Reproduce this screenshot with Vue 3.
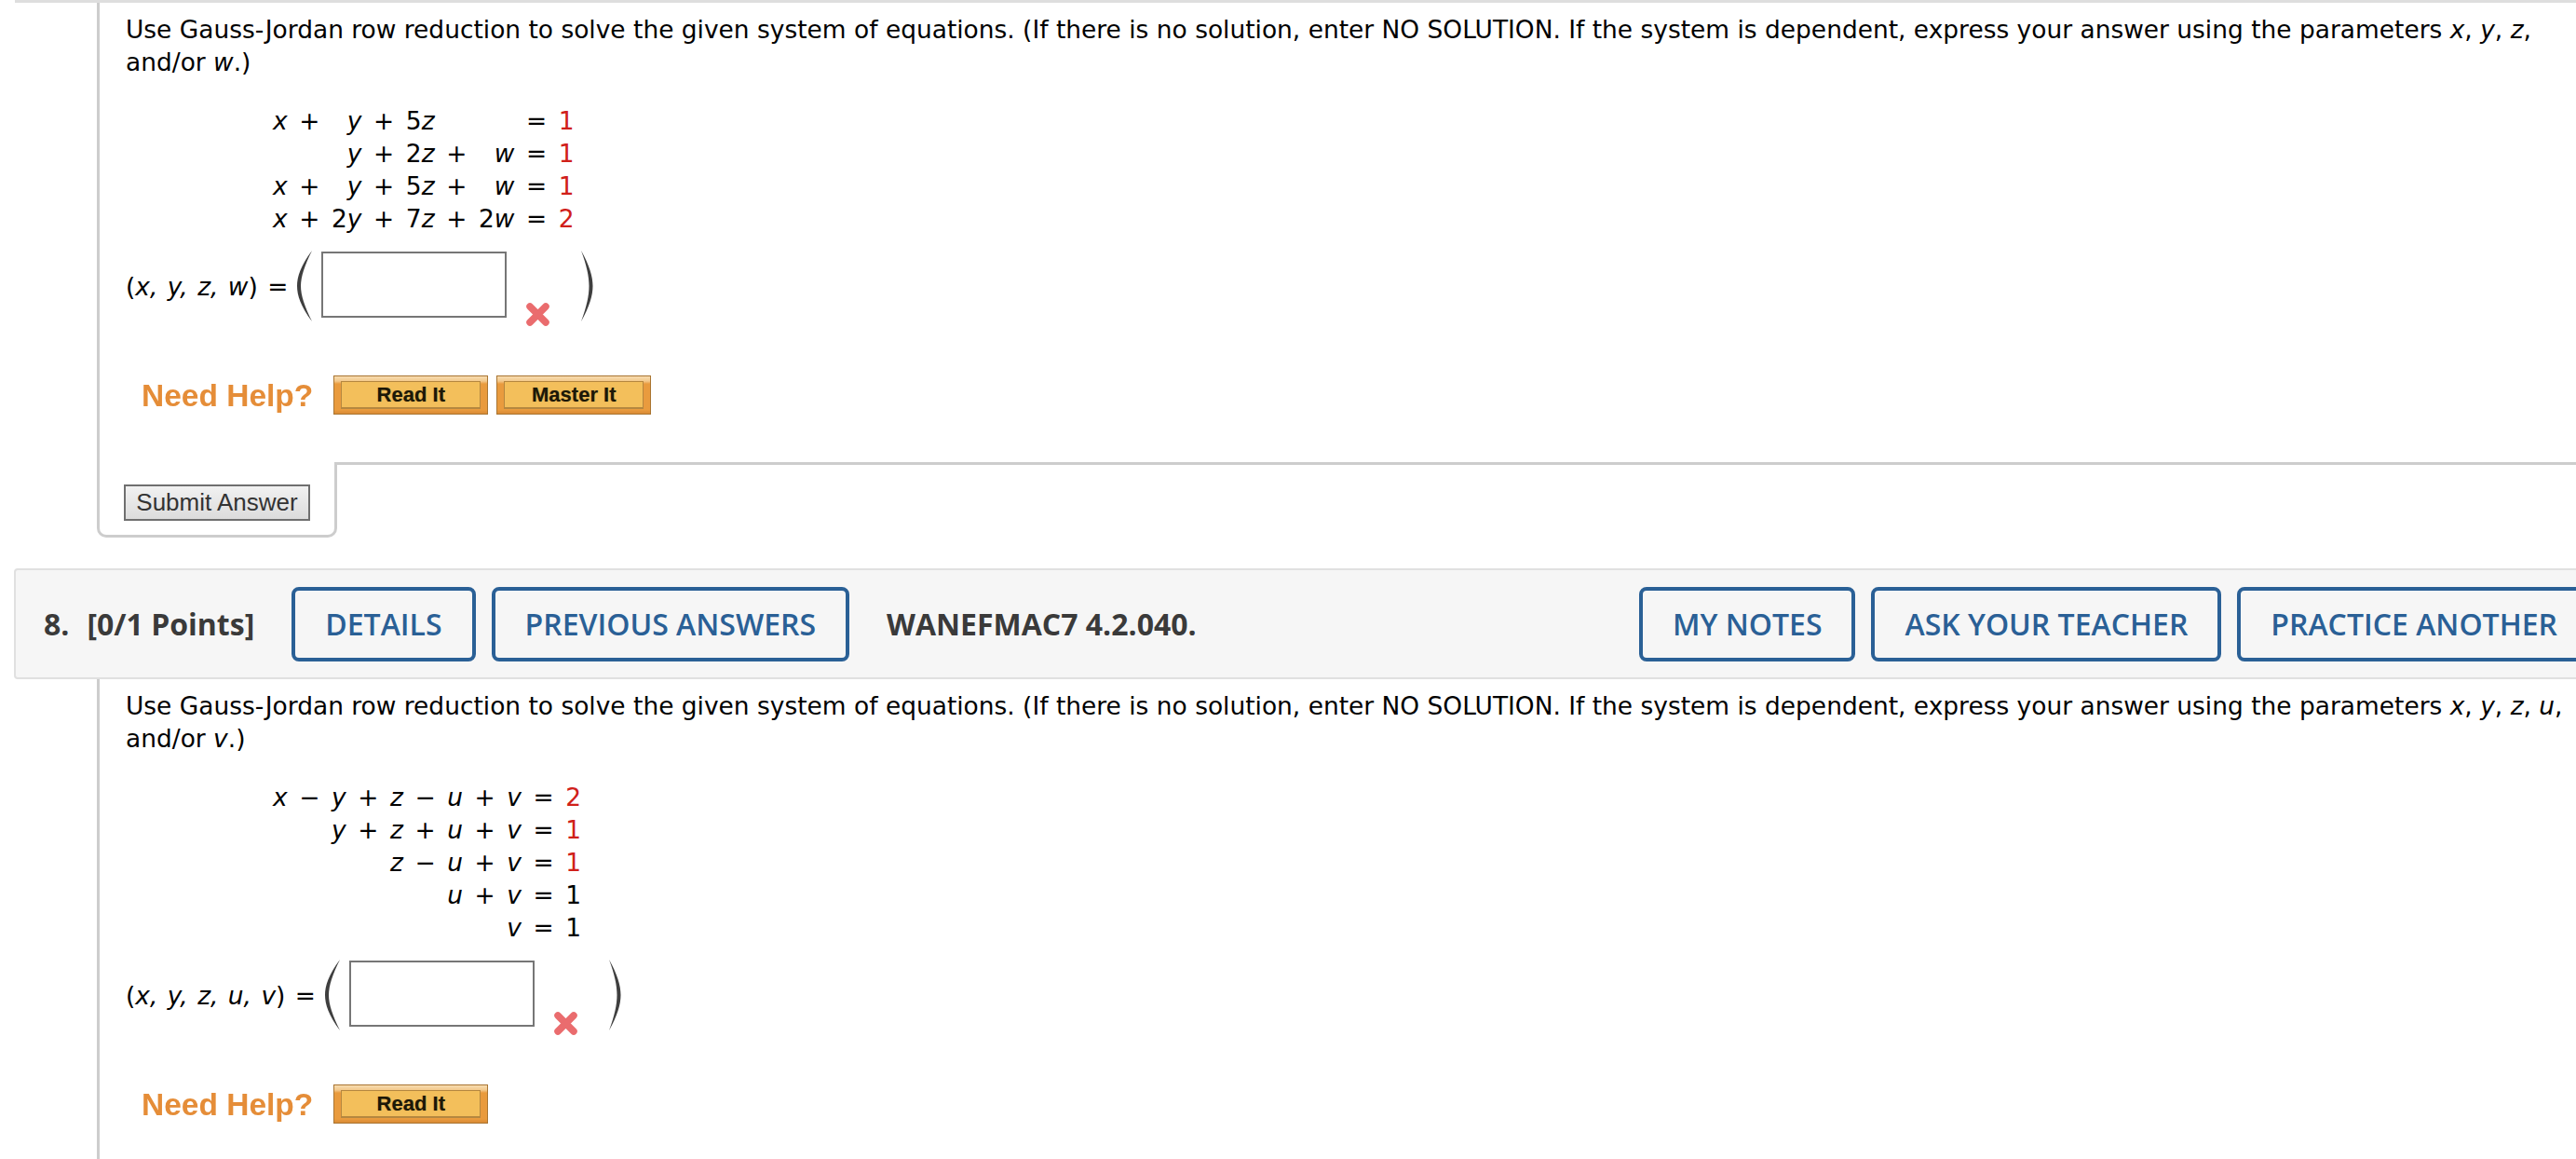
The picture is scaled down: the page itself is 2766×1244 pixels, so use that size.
<script setup>
const questions = [
  {
    id: 7,
    params: ['x', 'y', 'z'],
    last: 'w',
    label: 'x, y, z, w',
    rows: [
      { cells: ['x', '+', 'y', '+', '5z', '', '', '='], val: '1', red: true },
      { cells: ['', '', 'y', '+', '2z', '+', 'w', '='], val: '1', red: true },
      { cells: ['x', '+', 'y', '+', '5z', '+', 'w', '='], val: '1', red: true },
      { cells: ['x', '+', '2y', '+', '7z', '+', '2w', '='], val: '2', red: true }
    ],
    buttons: ['Read It', 'Master It'],
    submit: true
  },
  {
    id: 8,
    head: true,
    params: ['x', 'y', 'z', 'u'],
    last: 'v',
    label: 'x, y, z, u, v',
    rows: [
      { cells: ['x', '−', 'y', '+', 'z', '−', 'u', '+', 'v', '='], val: '2', red: true },
      { cells: ['', '', 'y', '+', 'z', '+', 'u', '+', 'v', '='], val: '1', red: true },
      { cells: ['', '', '', '', 'z', '−', 'u', '+', 'v', '='], val: '1', red: true },
      { cells: ['', '', '', '', '', '', 'u', '+', 'v', '='], val: '1', red: false },
      { cells: ['', '', '', '', '', '', '', '', 'v', '='], val: '1', red: false }
    ],
    buttons: ['Read It'],
    submit: false
  }
]

const coef = (t) => t.replace(/[a-z]/g, '')
const vari = (t) => t.replace(/[^a-z]/g, '')
const gridCols = (q) => ({ gridTemplateColumns: `repeat(${q.rows[0].cells.length + 1}, auto)` })
</script>

<template>
  <div class="viewport">
    <div class="page">
      <div class="topline"></div>

      <template v-for="q in questions" :key="q.id">
        <div v-if="q.head" class="qhead">
          <span class="qnum">8.</span>
          <span class="qpts">[0/1 Points]</span>
          <span class="btn first">DETAILS</span>
          <span class="btn">PREVIOUS ANSWERS</span>
          <span class="qcode">WANEFMAC7 4.2.040.</span>
          <span class="btn push">MY NOTES</span>
          <span class="btn">ASK YOUR TEACHER</span>
          <span class="btn">PRACTICE ANOTHER</span>
        </div>

        <div class="qbody" :class="{ open: !q.submit }">
          <p class="prompt">
            Use Gauss-Jordan row reduction to solve the given system of equations. (If there is no solution, enter NO SOLUTION. If the system is dependent, express your answer using the parameters
            <template v-for="p in q.params" :key="p"><i>{{ p }}</i>, </template>and/or <i>{{ q.last }}</i>.)
          </p>

          <div class="eqs" :style="gridCols(q)">
            <template v-for="(r, ri) in q.rows" :key="ri">
              <span v-for="(c, ci) in r.cells" :key="ci" class="cell">{{ coef(c) }}<i v-if="vari(c)">{{ vari(c) }}</i></span>
              <span class="cell" :class="{ red: r.red }">{{ r.val }}</span>
            </template>
          </div>

          <div class="answer">
            <span class="label">(<i>{{ q.label }}</i>) =</span>
            <svg class="paren pl" width="18" height="76" viewBox="0 0 18 76">
              <path d="M17 0C5 16 1 28 1 38C1 48 5 60 17 76C9 60 5 48 5 38C5 28 9 16 17 0Z" fill="#3f3f3f" />
            </svg>
            <span class="input"></span>
            <svg class="mark" width="27" height="27" viewBox="0 0 27 27">
              <path d="M5 5L22 22M22 5L5 22" stroke="#ea6c6e" stroke-width="7.500" stroke-linecap="round" />
            </svg>
            <svg class="paren pr" width="14" height="76" viewBox="0 0 14 76">
              <path d="M1 0C10 16 13.500 28 13.500 38C13.500 48 10 60 1 76C7 60 9.500 48 9.500 38C9.500 28 7 16 1 0Z" fill="#3f3f3f" />
            </svg>
          </div>

          <div class="help">
            <span class="need">Need Help?</span>
            <span v-for="b in q.buttons" :key="b" class="hbtn"><span class="hinner">{{ b }}</span></span>
          </div>
        </div>

        <div v-if="q.submit" class="qfoot">
          <div class="tab"><span class="submit">Submit Answer</span></div>
          <div class="fill"></div>
        </div>
      </template>
    </div>
  </div>
</template>

<style>
html, body { margin: 0; background: #fff; overflow: hidden; }
</style>

<style scoped>
.viewport {
  width: 2766px;
  height: 1244px;
  overflow: hidden;
  background: #fff;
}
.page {
  width: 2790px;
  font-family: "DejaVu Sans", Verdana, sans-serif;
  font-size: 26.440px;
  line-height: 35px;
  color: #000;
}
.topline {
  margin-left: 16px;
  height: 3px;
  background: #dedede;
}
.qbody {
  margin-left: 104px;
  border-left: 3px solid #cdcdcd;
  padding: 11px 0 0 28px;
  height: 493px;
  box-sizing: border-box;
}
.qbody.open {
  height: 515px;
}
.prompt {
  margin: 0;
  width: 2640px;
}
.eqs {
  display: grid;
  width: max-content;
  column-gap: 12.600px;
  justify-items: end;
  margin: 28px 0 0 158px;
}
.red { color: #d0201a; }
.answer {
  display: flex;
  align-items: center;
  height: 76px;
  margin-top: 17px;
}
.label {
  white-space: nowrap;
  word-spacing: 2px;
}
.paren { flex: none; }
.pl { margin-left: 9px; }
.input {
  flex: none;
  align-self: flex-start;
  box-sizing: border-box;
  width: 199px;
  height: 71px;
  margin: 1px 0 0 9px;
  border: 2px solid #767676;
  background: #fff;
}
.mark {
  flex: none;
  align-self: flex-end;
  margin: 0 0 -6px 20px;
}
.pr { margin-left: 32px; }
.help {
  display: flex;
  align-items: center;
  gap: 9px;
  margin: 58px 0 0 17px;
  height: 42px;
}
.need {
  font-family: "Liberation Sans", Arial, sans-serif;
  font-weight: 700;
  font-size: 33.500px;
  color: #e58d38;
  margin-right: 13px;
  filter: blur(0.5px);
}
.hbtn {
  box-sizing: border-box;
  width: 166px;
  height: 42px;
  padding: 5px 7px 5px;
  border: 1px solid #a97532;
  background: linear-gradient(#f7dcb0 0, #f3c98c 5px, #e99b3e 8px, #e99b3e 36px, #d98a35 100%);
  display: flex;
}
.hinner {
  flex: 1;
  display: flex;
  align-items: center;
  justify-content: center;
  box-sizing: border-box;
  border: 1px solid #b5873f;
  border-bottom-width: 2px;
  background: #f3bf5b;
  font-family: "Liberation Sans", Arial, sans-serif;
  font-weight: 700;
  font-size: 22px;
  line-height: 1;
  color: #1c1808;
  text-shadow: 0 0 1px rgba(60, 45, 10, .5);
}
.qfoot {
  display: flex;
  margin-left: 104px;
  height: 81px;
}
.tab {
  box-sizing: border-box;
  width: 258px;
  height: 81px;
  padding: 24px 0 0 26px;
  border: 3px solid #cdcdcd;
  border-top: 0;
  border-radius: 0 0 10px 10px;
}
.fill {
  flex: 1;
  border-top: 3px solid #cdcdcd;
  margin-left: -3px;
}
.submit {
  display: block;
  box-sizing: border-box;
  width: 200px;
  height: 39px;
  border: 2px solid #6f6f6f;
  background: linear-gradient(#f1f1f1, #dcdcdc);
  font-family: "Liberation Sans", Arial, sans-serif;
  font-size: 26px;
  line-height: 35px;
  text-align: center;
  color: #333;
}
.qhead {
  display: flex;
  align-items: center;
  box-sizing: border-box;
  height: 119px;
  margin: 33px 0 0 15px;
  padding: 0 6px 0 30px;
  background: #f6f6f6;
  border: 2px solid #e0e0e0;
  border-radius: 4px;
  font-family: "Open Sans", sans-serif;
  font-weight: 600;
  font-size: 32px;
  line-height: 40px;
  white-space: nowrap;
}
.qnum, .qpts, .qcode {
  font-weight: 700;
  font-size: 32px;
  color: #3a3a3a;
}
.qpts { margin-left: 19px; }
.qcode { margin-left: 40px; }
.btn {
  box-sizing: border-box;
  height: 80px;
  padding: 0 32px;
  margin-left: 17px;
  display: flex;
  align-items: center;
  border: 4px solid #2a6096;
  border-radius: 8px;
  color: #2a6096;
}
.btn.first { margin-left: 40px; }
.btn.push { margin-left: auto; }
</style>
